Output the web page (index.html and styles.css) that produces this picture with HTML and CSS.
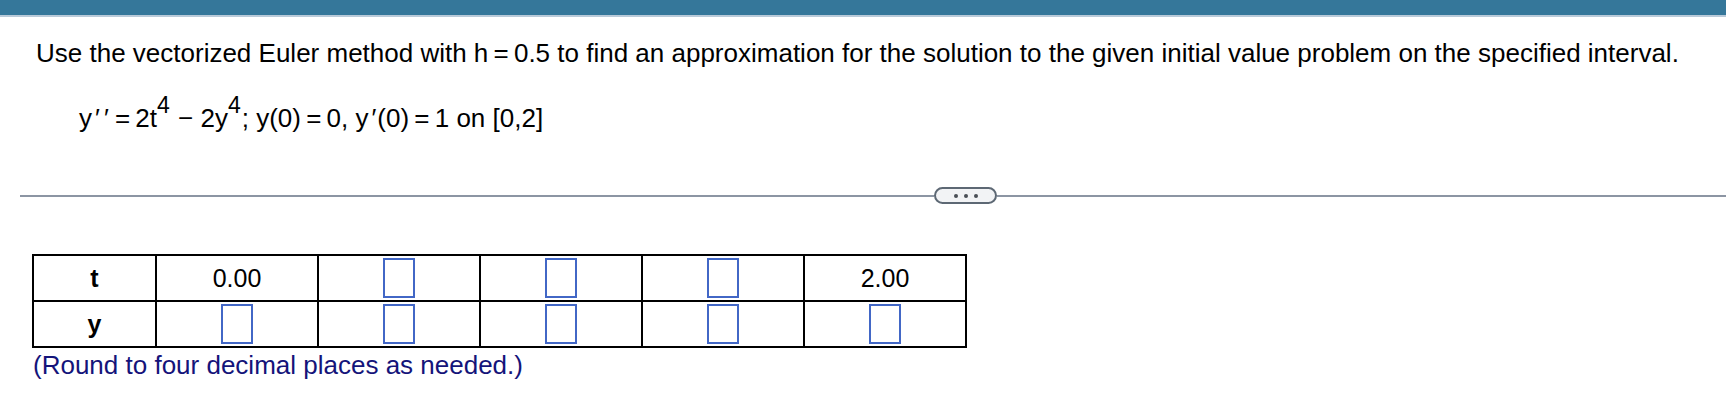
FILE: index.html
```html
<!DOCTYPE html>
<html lang="en">
<head>
<meta charset="utf-8">
<title>Euler method</title>
<link rel="stylesheet" href="styles.css">
</head>
<body>
<div class="topbar"></div>
<main class="content">
  <p class="question">Use the vectorized Euler method with h&#8201;=&#8201;0.5 to find an approximation for the solution to the given initial value problem on the specified interval.</p>
  <p class="equation">y<span class="prime">&#8242;</span><span class="prime">&#8242;</span>&#8201;=&#8201;2t<sup>4</sup> &#8722; 2y<sup>4</sup>; y(0)&#8201;=&#8201;0, y<span class="prime">&#8242;</span>(0)&#8201;=&#8201;1 on [0,2]</p>
  <div class="separator">
    <span class="rule"></span>
    <button class="more" type="button" aria-label="more"><i></i><i></i><i></i></button>
    <span class="rule"></span>
  </div>
  <table class="grid">
    <tr>
      <th>t</th>
      <td>0.00</td>
      <td><span class="box"></span></td>
      <td><span class="box"></span></td>
      <td><span class="box"></span></td>
      <td>2.00</td>
    </tr>
    <tr>
      <th>y</th>
      <td><span class="box"></span></td>
      <td><span class="box"></span></td>
      <td><span class="box"></span></td>
      <td><span class="box"></span></td>
      <td><span class="box"></span></td>
    </tr>
  </table>
  <p class="note">(Round to four decimal places as needed.)</p>
</main>
</body>
</html>
```

FILE: styles.css
```css
html, body {
  margin: 0;
  padding: 0;
  background: #ffffff;
}
body {
  font-family: "Liberation Sans", Arial, sans-serif;
  font-size: 26px;
  color: #000;
}
.topbar {
  height: 15px;
  background: #35779a;
  border-bottom: 2px solid #b9cad9;
}
.content {
  padding: 0 0 0 20px;
}
.question {
  margin: 21px 0 0 16px;
  line-height: 30px;
}
.equation {
  margin: 35px 0 0 59px;
  line-height: 30px;
}
.prime {
  padding-left: 3px;
  padding-right: 1px;
}
.equation sup {
  font-size: 23px;
  line-height: 0;
  vertical-align: 14px;
  padding-right: 1px;
}
.separator {
  display: flex;
  align-items: center;
  height: 17px;
  margin-top: 54px;
}
.rule {
  height: 2px;
  background: #8c95a3;
}
.rule:first-child {
  width: 914px;
}
.rule:last-child {
  flex: 1;
}
.more {
  box-sizing: border-box;
  width: 63px;
  height: 17px;
  padding: 0;
  border: 2px solid #5d6874;
  border-radius: 9px;
  background: #f2f3f5;
  display: flex;
  align-items: center;
  justify-content: center;
  gap: 6px;
}
.more i {
  width: 4px;
  height: 4px;
  border-radius: 50%;
  background: #4a4f55;
}
.grid {
  margin: 50px 0 0 12px;
  border-collapse: collapse;
}
.grid th, .grid td {
  border: 2px solid #000;
  text-align: center;
  padding: 0;
  width: 160px;
  height: 44px;
  font-size: 25px;
  line-height: 28px;
}
.grid th {
  width: 121px;
  font-weight: bold;
}
.box {
  display: inline-block;
  box-sizing: border-box;
  width: 32px;
  height: 40px;
  border: 2px solid #4267c6;
  vertical-align: middle;
}
.note {
  margin: 2px 0 0 13px;
  line-height: 30px;
  color: #14147a;
}
```
